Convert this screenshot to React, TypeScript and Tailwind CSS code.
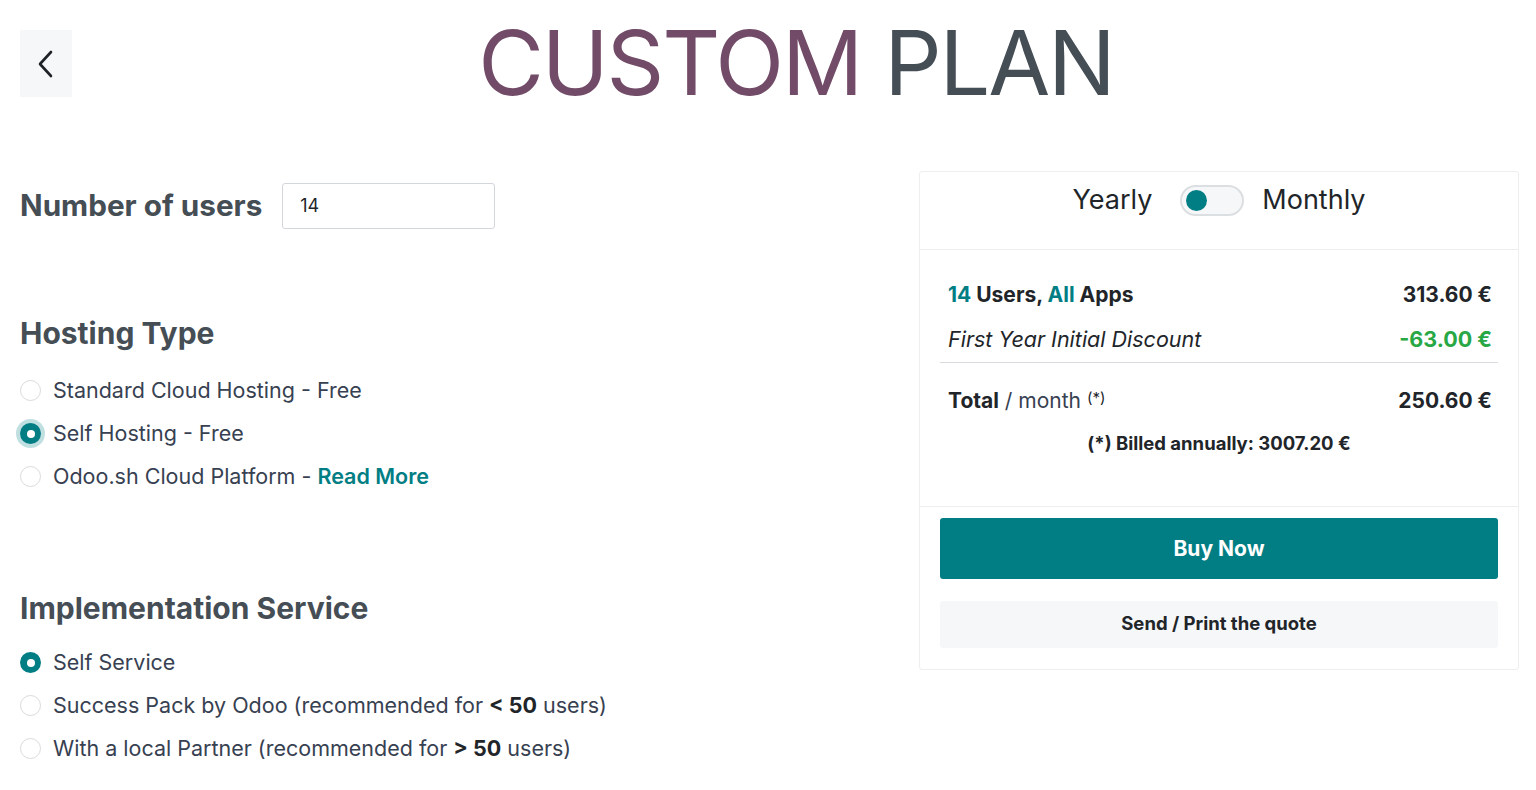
import React from 'react';

function Radio({ checked, focus }: { checked?: boolean; focus?: boolean }) {
  if (checked) {
    return (
      <span
        className={`w-[21px] h-[21px] rounded-full bg-[#017e84] flex items-center justify-center shrink-0 ${
          focus ? 'shadow-[0_0_0_4px_rgba(1,126,132,0.25)]' : ''
        }`}
      >
        <span className="w-[8px] h-[8px] rounded-full bg-white" />
      </span>
    );
  }
  return <span className="w-[21px] h-[21px] rounded-full border border-[#d8dadd] bg-white shrink-0" />;
}

function Option({ checked, focus, children }: { checked?: boolean; focus?: boolean; children: React.ReactNode }) {
  return (
    <label className="flex items-center gap-[12px] h-[43px] text-[21.5px] text-[#374151]">
      <Radio checked={checked} focus={focus} />
      <span>{children}</span>
    </label>
  );
}

export default function App() {
  return (
    <div className="min-h-[790px] bg-white font-['Inter',sans-serif] text-[#212529]">
      <header className="flex items-start pt-[30px] pl-[20px] pr-[16px]">
        <button className="w-[52px] h-[67px] bg-[#f6f7f8] flex items-center justify-center">
          <svg width="18" height="30" viewBox="0 0 18 30" fill="none">
            <path d="M14 3 L3 15 L14 27" stroke="#1f2328" strokeWidth="2.6" strokeLinecap="round" strokeLinejoin="round" />
          </svg>
        </button>
        <h1 className="flex-1 text-center text-[90px] leading-none -mt-[12px] tracking-[-2.2px]">
          <span className="text-[#714b67]">CUSTOM</span> <span className="text-[#454d55]">PLAN</span>
        </h1>
      </header>

      <main className="flex pl-[20px] pr-[17px] mt-[63px]">
        <section className="flex-1">
          <div className="flex items-center gap-[20px] h-[47px] mt-[11px]">
            <h2 className="text-[29.7px] font-bold text-[#454d55]">Number of users</h2>
            <div className="w-[213px] h-[46px] border border-[#d3d6da] rounded-[3px] flex items-center px-[17px] text-[18px] text-[#212529]">
              14
            </div>
          </div>

          <h2 className="text-[30px] font-bold text-[#454d55] mt-[86px] leading-[36px]">Hosting Type</h2>
          <div className="mt-[18px]">
            <Option>Standard Cloud Hosting - Free</Option>
            <Option checked focus>Self Hosting - Free</Option>
            <Option>
              Odoo.sh Cloud Platform - <span className="font-semibold text-[#017e84]">Read More</span>
            </Option>
          </div>

          <h2 className="text-[30px] font-bold text-[#454d55] mt-[92px] leading-[36px]">Implementation Service</h2>
          <div className="mt-[15px]">
            <Option checked>Self Service</Option>
            <Option>
              Success Pack by Odoo (recommended for <b className="font-bold text-[#212529]">&lt; 50</b> users)
            </Option>
            <Option>
              With a local Partner (recommended for <b className="font-bold text-[#212529]">&gt; 50</b> users)
            </Option>
          </div>
        </section>

        <aside className="w-[600px] border border-[#eceef0] rounded-[3px] shrink-0 self-start">
          <div className="h-[78px] flex items-center justify-center pb-[20px] border-b border-[#eceef0] text-[27px] text-[#212529]">
            <span>Yearly</span>
            <span className="ml-[28px] mr-[18px] w-[64px] h-[31px] rounded-full bg-[#f6f7f8] border-2 border-[#dcdfe2] flex items-center pl-[4px]">
              <span className="w-[21px] h-[21px] rounded-full bg-[#017e84]" />
            </span>
            <span>Monthly</span>
          </div>

          <div className="px-[20px] pt-[23px] pb-[48px] border-b border-[#eceef0]">
            <div className="flex justify-between items-center h-[44px] pl-[8px] pr-[6px] text-[21px] font-bold">
              <span>
                <span className="text-[#017e84]">14</span> Users, <span className="text-[#017e84]">All</span> Apps
              </span>
              <span>313.60 €</span>
            </div>
            <div className="flex justify-between items-center h-[44px] pl-[8px] pr-[6px] text-[21.5px]">
              <span className="italic">First Year Initial Discount</span>
              <span className="font-bold text-[#28a745]">-63.00 €</span>
            </div>
            <div className="h-px bg-[#d8dadd] mt-[1px]" />
            <div className="flex justify-between items-center h-[44px] pl-[8px] pr-[6px] text-[21px] mt-[16px]">
              <span>
                <b className="font-bold">Total</b> <span className="text-[#374151] font-normal">/ month</span>{' '}
                <sup className="text-[15px] relative -top-[5px]">(*)</sup>
              </span>
              <span className="font-bold">250.60 €</span>
            </div>
            <p className="text-center text-[18.5px] font-bold mt-[7px]">(*) Billed annually: 3007.20 €</p>
          </div>

          <div className="px-[20px] pt-[11px] pb-[21px] flex flex-col gap-[22px]">
            <button className="h-[61px] rounded-[3px] bg-[#017e84] text-white text-[21px] font-bold">Buy Now</button>
            <button className="h-[47px] rounded-[3px] bg-[#f6f7f8] text-[#212529] text-[18.5px] font-bold">
              Send / Print the quote
            </button>
          </div>
        </aside>
      </main>
    </div>
  );
}
